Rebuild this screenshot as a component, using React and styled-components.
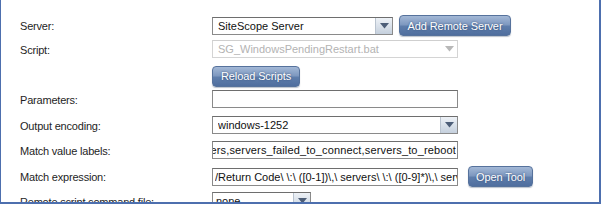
import React from "react";
import styled, { createGlobalStyle } from "styled-components";

const Global = createGlobalStyle`
  html, body { margin: 0; padding: 0; background: #ffffff; }
  * { box-sizing: border-box; }
`;

const Frame = styled.div`
  width: 601px;
  height: 204px;
  overflow: hidden;
  background: #ffffff;
  border-left: 1px solid #4d6fae;
  border-right: 2px solid #4d6fae;
  border-bottom: 2px solid #4d6fae;
  font-family: "Liberation Sans", Arial, sans-serif;
  font-size: 11px;
  letter-spacing: -0.2px;
  color: #1e1e1e;
`;

const Form = styled.div`
  display: flex;
  flex-direction: column;
  padding: 15px 0 0 19px;
`;

const Row = styled.div`
  display: grid;
  grid-template-columns: 192px 1fr;
  align-items: center;
  height: ${(p) => p.$h || 20}px;
  margin-top: ${(p) => p.$mt || 0}px;
`;

const Label = styled.div`
  white-space: nowrap;
  padding-top: 1px;
`;

const Controls = styled.div`
  display: flex;
  align-items: center;
  gap: ${(p) => p.$gap || 6}px;
`;

const Field = styled.div`
  width: ${(p) => p.$w}px;
  height: 18px;
  flex: none;
  border: 1px solid ${(p) => (p.$disabled ? "#d4d4d4" : "#8a8a8a")};
  border-top-color: ${(p) => (p.$disabled ? "#cfcfcf" : "#6e6e6e")};
  background: #ffffff;
  display: flex;
  align-items: center;
  justify-content: ${(p) => (p.$end ? "flex-end" : "flex-start")};
  overflow: hidden;
  color: ${(p) => (p.$disabled ? "#b3b3b3" : "#111")};
  letter-spacing: ${(p) => p.$ls ?? 0}px;
  padding-left: ${(p) => p.$pl ?? 5}px;
  padding-right: ${(p) => p.$pr ?? 0}px;
`;

const FieldText = styled.span`
  flex: ${(p) => (p.$grow ? "1 1 auto" : p.$fixed ? "none" : "0 1 auto")};
  min-width: 0;
  white-space: nowrap;
  overflow: hidden;
`;

const ArrowBox = styled.div`
  width: 17px;
  height: 16px;
  flex: none;
  display: flex;
  align-items: center;
  justify-content: center;
  background: ${(p) =>
    p.$disabled ? "transparent" : "linear-gradient(#eef2f7, #c5d0dd)"};
  border-left: 1px solid ${(p) => (p.$disabled ? "transparent" : "#b9c3cf")};
`;

const Button = styled.button`
  width: ${(p) => p.$w}px;
  height: 21px;
  padding: 0;
  flex: none;
  border: 1px solid #56729c;
  border-radius: 4px;
  background: linear-gradient(#a3b8d6 0%, #7f99c0 45%, #5e7dab 55%, #4f6e9e 100%);
  box-shadow: 0 1px 1px rgba(60, 80, 110, 0.35);
  color: #ffffff;
  font-family: "Liberation Sans", Arial, sans-serif;
  font-size: 11px;
  letter-spacing: -0.1px;
  text-shadow: 0 0 2px #2f4a74;
  white-space: nowrap;
  cursor: pointer;
`;

const Arrow = ({ disabled }) => (
  <ArrowBox $disabled={disabled}>
    <svg width="9" height="6" viewBox="0 0 9 6">
      <path d="M0 0 H9 L4.5 5.5 Z" fill={disabled ? "#b8b8b8" : "#4d5e78"} />
    </svg>
  </ArrowBox>
);

const Select = ({ w, text, disabled, pl }) => (
  <Field $w={w} $disabled={disabled} $pl={pl}>
    <FieldText $grow>{text}</FieldText>
    <Arrow disabled={disabled} />
  </Field>
);

export default function App() {
  return (
    <>
      <Global />
      <Frame>
        <Form>
          <Row>
            <Label>Server:</Label>
            <Controls>
              <Select w={181} text="SiteScope Server" />
              <Button $w={112}>Add Remote Server</Button>
            </Controls>
          </Row>
          <Row $mt={4}>
            <Label>Script:</Label>
            <Controls>
              <Select w={246} text="SG_WindowsPendingRestart.bat" disabled />
            </Controls>
          </Row>
          <Row $mt={6} $h={22}>
            <Label />
            <Controls>
              <Button $w={88}>Reload Scripts</Button>
            </Controls>
          </Row>
          <Row $mt={2}>
            <Label>Parameters:</Label>
            <Controls>
              <Field $w={246} />
            </Controls>
          </Row>
          <Row $mt={6}>
            <Label>Output encoding:</Label>
            <Controls>
              <Select w={246} text="windows-1252" />
            </Controls>
          </Row>
          <Row $mt={5}>
            <Label>Match value labels:</Label>
            <Controls>
              <Field $w={246} $end $pl={0} $pr={1} $ls={0.15}>
                <FieldText $fixed>
                  number_of_servers,servers_failed_to_connect,servers_to_reboot
                </FieldText>
              </Field>
            </Controls>
          </Row>
          <Row $mt={6}>
            <Label>Match expression:</Label>
            <Controls $gap={10}>
              <Field $w={246} $pl={2}>
                <FieldText>
                  /Return Code\ \:\ ([0-1])\,\ servers\ \:\ ([0-9]*)\,\ servers_to_reboot/
                </FieldText>
              </Field>
              <Button $w={65}>Open Tool</Button>
            </Controls>
          </Row>
          <Row $mt={5}>
            <Label>Remote script command file:</Label>
            <Controls>
              <Select w={99} text="none" pl={3} />
            </Controls>
          </Row>
        </Form>
      </Frame>
    </>
  );
}
